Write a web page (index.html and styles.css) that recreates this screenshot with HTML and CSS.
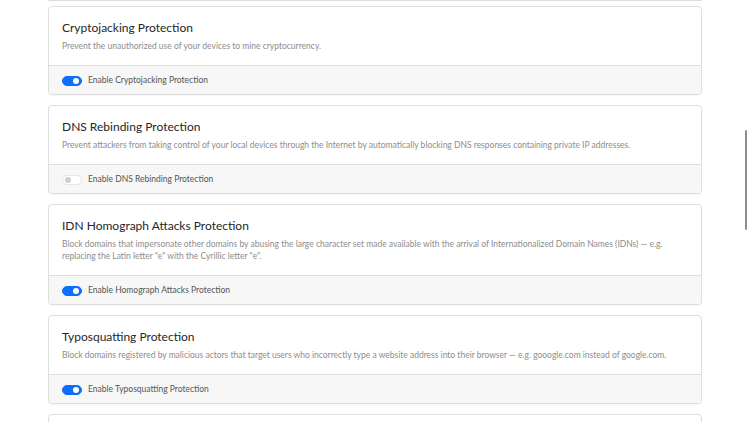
FILE: index.html
```html
<!DOCTYPE html>
<html lang="en">
<head>
  <meta charset="UTF-8">
  <meta name="viewport" content="width=device-width, initial-scale=1.0">
  <title>Protection Settings</title>
  <link rel="stylesheet" href="styles.css">
</head>
<body>
  <div class="settings">
    <div class="card card-tail"></div>

    <div class="card">
      <div class="card-body">
        <h2>Cryptojacking Protection</h2>
        <p>Prevent the unauthorized use of your devices to mine cryptocurrency.</p>
      </div>
      <div class="card-footer">
        <label class="switch">
          <input type="checkbox" checked>
          <span class="track"></span>
          Enable Cryptojacking Protection
        </label>
      </div>
    </div>

    <div class="card">
      <div class="card-body">
        <h2>DNS Rebinding Protection</h2>
        <p>Prevent attackers from taking control of your local devices through the Internet by automatically blocking DNS responses containing private IP addresses.</p>
      </div>
      <div class="card-footer">
        <label class="switch">
          <input type="checkbox">
          <span class="track"></span>
          Enable DNS Rebinding Protection
        </label>
      </div>
    </div>

    <div class="card">
      <div class="card-body">
        <h2>IDN Homograph Attacks Protection</h2>
        <p>Block domains that impersonate other domains by abusing the large character set made available with the arrival of Internationalized Domain Names (IDNs) — e.g. replacing the Latin letter "e" with the Cyrillic letter "е".</p>
      </div>
      <div class="card-footer">
        <label class="switch">
          <input type="checkbox" checked>
          <span class="track"></span>
          Enable Homograph Attacks Protection
        </label>
      </div>
    </div>

    <div class="card">
      <div class="card-body">
        <h2>Typosquatting Protection</h2>
        <p>Block domains registered by malicious actors that target users who incorrectly type a website address into their browser — e.g. gooogle.com instead of google.com.</p>
      </div>
      <div class="card-footer">
        <label class="switch">
          <input type="checkbox" checked>
          <span class="track"></span>
          Enable Typosquatting Protection
        </label>
      </div>
    </div>

    <div class="card card-next"></div>
  </div>
  <div class="scrollbar"></div>
</body>
</html>
```

FILE: styles.css
```css
body {
  margin: 0;
  background-color: #fff;
  font-family: Lato, 'Noto Sans', sans-serif;
  color: #333;
  overflow: hidden;
}

.settings {
  width: 654px;
  margin: 0 auto;
  display: flex;
  flex-direction: column;
  gap: 10px;
}

.card {
  border: 1px solid #dedede;
  border-radius: 4px;
  background-color: #fff;
  box-shadow: 0 1px 2px rgba(0, 0, 0, 0.04);
  overflow: hidden;
}

.card-tail {
  height: 0;
  border-top: none;
  border-radius: 0 0 4px 4px;
  margin-bottom: -5px;
}

.card-next {
  height: 40px;
}

.card-body {
  padding: 12px 13px 13px;
}

h2 {
  margin: 0 0 3px;
  font-size: 12px;
  font-weight: 400;
  line-height: 18px;
  color: #262626;
}

p {
  margin: 0;
  font-size: 8.5px;
  line-height: 12px;
  color: #8d8d8d;
}

.card-footer {
  background-color: #f7f7f7;
  border-top: 1px solid #dedede;
  padding: 7px 13px 6px;
}

.switch {
  display: flex;
  align-items: center;
  gap: 6px;
  font-size: 8.5px;
  line-height: 15px;
  color: #555;
}

.switch input {
  display: none;
}

.track {
  position: relative;
  width: 20px;
  height: 10px;
  border-radius: 5px;
  border: 1px solid #e6e6e6;
  background-color: #fff;
  box-sizing: border-box;
}

.track::after {
  content: '';
  position: absolute;
  top: 1px;
  left: 2px;
  width: 6px;
  height: 6px;
  border-radius: 50%;
  background-color: #cfcfcf;
}

.switch input:checked + .track {
  background-color: #0d6efd;
  border-color: #0d6efd;
}

.switch input:checked + .track::after {
  left: auto;
  right: 2px;
  background-color: #fff;
}

.scrollbar {
  position: fixed;
  top: 130px;
  right: 3px;
  width: 2px;
  height: 100px;
  border-radius: 1px;
  background-color: #8d8d8d;
}
```
